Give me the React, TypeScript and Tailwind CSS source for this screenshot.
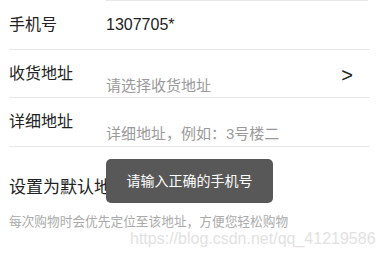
const font = "font-['Liberation_Sans','Noto_Sans_CJK_SC',sans-serif]";

export default function App() {
  return (
    <div className={`relative h-[258px] w-[383px] overflow-hidden bg-white text-[#222] ${font}`}>
      {/* 上一行的分割线 */}
      <div className="ml-[106px] h-px w-[262px] bg-[#e8e8e8]" />

      {/* 手机号 */}
      <div className="ml-[9px] mr-[13px] flex h-[49px] items-center border-b border-[#e8e8e8]">
        <div className="w-[97px] text-[16px] leading-5">手机号</div>
        <div className="text-[16px] leading-5">1307705*</div>
      </div>

      {/* 收货地址 */}
      <div className="ml-[9px] mr-[13px] flex h-[48px] border-b border-[#e8e8e8]">
        <div className="w-[97px] pt-[14px] text-[16px] leading-5">收货地址</div>
        <div className="flex-1 pt-[26px] text-[15px] leading-5 text-[#9a9a9a]">请选择收货地址</div>
        <div className="pr-[17px] pt-[13px] text-[20px] leading-6">&gt;</div>
      </div>

      {/* 详细地址 */}
      <div className="ml-[9px] mr-[13px] flex h-[49px] border-b border-[#e8e8e8]">
        <div className="w-[97px] pt-[14px] text-[16px] leading-5">详细地址</div>
        <div className="pt-[26px] text-[15px] leading-5 text-[#9a9a9a]">详细地址，例如：3号楼二</div>
      </div>

      {/* 设置为默认地址 */}
      <div className="ml-[9px] pt-[30px] text-[17px] leading-[22px]">设置为默认地址</div>
      <div className="ml-[9px] pt-[15px] text-[12.7px] leading-[16px] text-[#aaaaaa]">
        每次购物时会优先定位至该地址，方便您轻松购物
      </div>
      <div className="ml-[130px] text-[16px] leading-[18px] text-[#e2e2e2]">https://blog.csdn.net/qq_41219586</div>

      {/* 提示 toast */}
      <div className="absolute left-[106px] top-[159px] flex h-[44px] w-[167px] items-center justify-center rounded-[5px] bg-[#585858] text-[14px] text-white">
        请输入正确的手机号
      </div>
    </div>
  );
}
